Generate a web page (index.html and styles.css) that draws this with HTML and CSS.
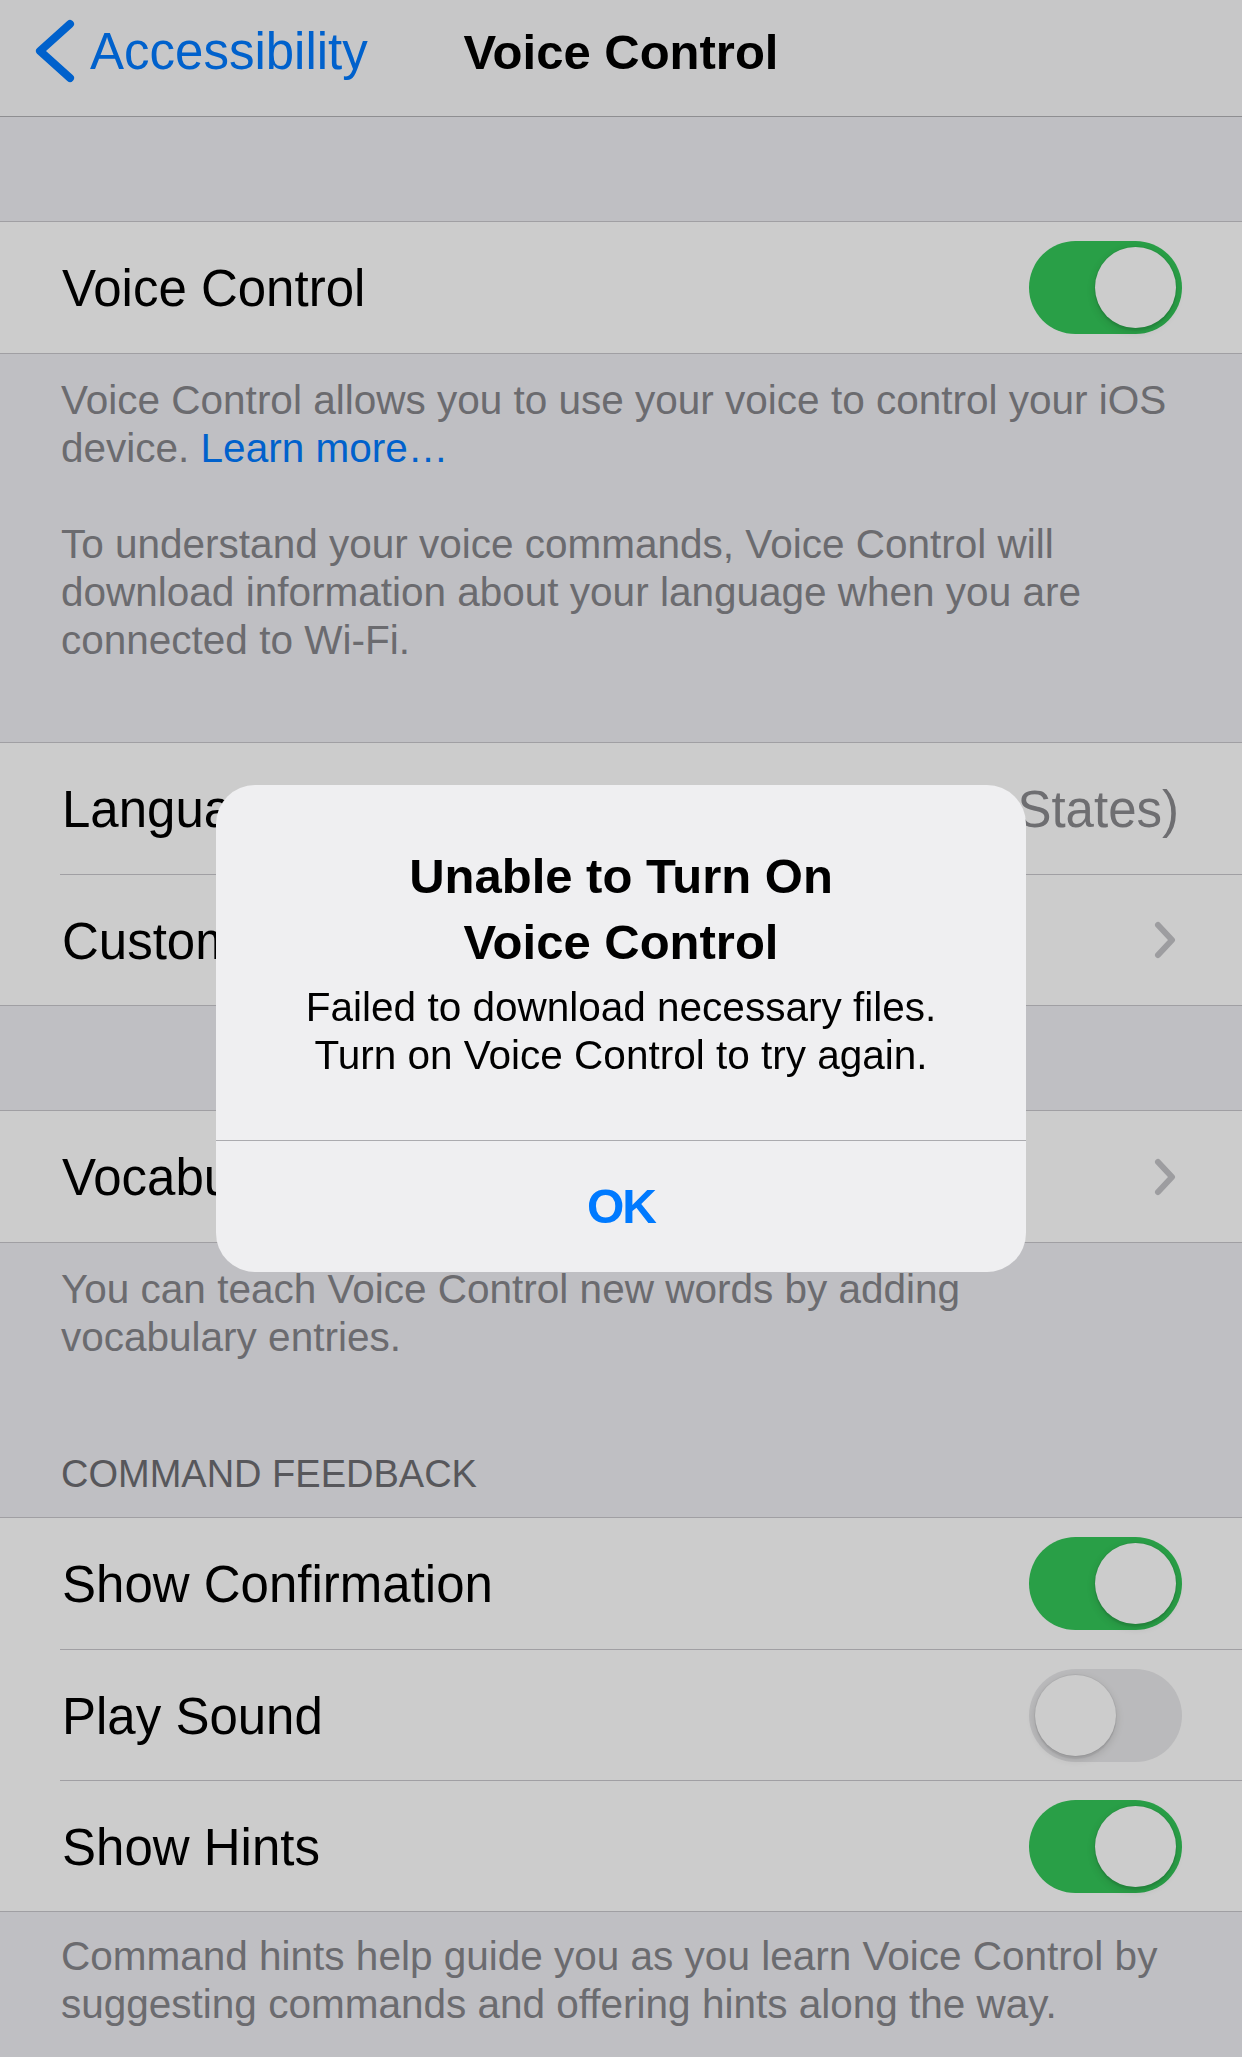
FILE: index.html
```html
<!DOCTYPE html>
<html>
<head>
    <title>Voice Control</title>
    <link rel="stylesheet" href="styles.css">
</head>
<body>
    <div class="screen">
        <header class="navbar">
            <a class="back">
                <svg class="back-chevron" width="46" height="60" viewBox="0 0 46 60">
                    <polyline points="40,2 10,29 40,56" />
                </svg>
                <span>Accessibility</span>
            </a>
            <h1 class="title">Voice Control</h1>
        </header>

        <section class="group spaced">
            <div class="cell">
                <span class="label">Voice Control</span>
                <span class="switch on"></span>
            </div>
        </section>
        <div class="footer">
            <p>Voice Control allows you to use your voice to control your iOS device. <a class="link">Learn more…</a></p>
            <p class="next">To understand your voice commands, Voice Control will download information about your language when you are connected to Wi-Fi.</p>
        </div>

        <section class="group">
            <div class="cell">
                <span class="label">Language</span>
                <span class="value">English (United States)</span>
            </div>
            <div class="cell">
                <span class="label">Customize Commands</span>
                <svg class="chevron" width="26" height="40" viewBox="0 0 26 40"><polyline points="5,5 19,20 5,35" /></svg>
            </div>
        </section>

        <section class="group spaced">
            <div class="cell">
                <span class="label">Vocabulary</span>
                <svg class="chevron" width="26" height="40" viewBox="0 0 26 40"><polyline points="5,5 19,20 5,35" /></svg>
            </div>
        </section>
        <div class="footer">
            <p>You can teach Voice Control new words by adding<br>vocabulary entries.</p>
        </div>

        <div class="section-header">COMMAND FEEDBACK</div>
        <section class="group">
            <div class="cell">
                <span class="label">Show Confirmation</span>
                <span class="switch on"></span>
            </div>
            <div class="cell">
                <span class="label">Play Sound</span>
                <span class="switch"></span>
            </div>
            <div class="cell">
                <span class="label">Show Hints</span>
                <span class="switch on"></span>
            </div>
        </section>
        <div class="footer last">
            <p>Command hints help guide you as you learn Voice Control by suggesting commands and offering hints along the way.</p>
        </div>
    </div>

    <!-- dimmed backdrop with the alert on top -->
    <div class="dim">
        <div class="alert">
            <div class="alert-body">
                <div class="alert-title">Unable to Turn On<br>Voice Control</div>
                <div class="alert-msg">Failed to download necessary files.<br>Turn on Voice Control to try again.</div>
            </div>
            <div class="alert-actions">
                <span class="alert-btn">OK</span>
            </div>
        </div>
    </div>
</body>
</html>
```

FILE: styles.css
```css
* { box-sizing: border-box; }
body { margin: 0; width: 1242px; height: 2057px; overflow: hidden; background: #efeff4; font-family: "Liberation Sans", Arial, sans-serif; color: #000; }
p { margin: 0; }

.screen { height: 2057px; }

/* navigation bar */
.navbar { display: grid; grid-template-columns: 1fr auto 1fr; align-items: start; height: 117px; padding: 22px 30px 0; background: #f9f9fb; border-bottom: 1px solid #b2b2b6; }
.back { display: flex; align-items: center; height: 60px; color: #007aff; font-size: 51px; line-height: 60px; }
.back-chevron { overflow: visible; margin-right: 14px; flex: none; }
.back-chevron polyline { fill: none; stroke: #007aff; stroke-width: 8; stroke-linecap: round; stroke-linejoin: round; }
.title { margin: 0; font-size: 49px; line-height: 60px; font-weight: bold; }

/* grouped table */
.group { background: #fff; border-top: 1px solid #c8c7cc; border-bottom: 1px solid #c8c7cc; }
.group.spaced { margin-top: 104px; }
.cell { display: flex; align-items: center; min-height: 131px; margin-left: 60px; padding: 0 60px 0 2px; }
.cell + .cell { border-top: 1px solid #c8c7cc; }
.label { padding-top: 2px; font-size: 51px; white-space: nowrap; }
.value { margin-left: auto; margin-right: 3px; padding-top: 2px; font-size: 51px; color: #8a8a8e; white-space: nowrap; }
.chevron { margin-left: auto; margin-right: 3px; flex: none; }
.chevron polyline { fill: none; stroke: #c5c5c8; stroke-width: 6; stroke-linecap: round; stroke-linejoin: round; }

/* toggle switch */
.switch { position: relative; margin-left: auto; flex: none; width: 153px; height: 93px; border-radius: 47px; background: #e9e9eb; }
.switch::after { content: ""; position: absolute; top: 6px; left: 6px; width: 81px; height: 81px; border-radius: 50%; background: #fff; box-shadow: 0 3px 8px rgba(0,0,0,0.15), 0 3px 1px rgba(0,0,0,0.06), 0 0 0 1px rgba(0,0,0,0.04); }
.switch.on { background: #34c759; }
.switch.on::after { left: auto; right: 6px; }

/* footers and headers */
.footer { padding: 22px 50px 78px 61px; font-size: 40.5px; line-height: 48px; color: #86868b; }
.footer.last { padding-top: 20px; }
.footer .next { margin-top: 48px; }
.link { color: #007aff; }
.section-header { padding: 12px 61px 20px; font-size: 38px; line-height: 46px; color: #6d6d72; }

/* alert */
.dim { position: fixed; top: 0; left: 0; right: 0; bottom: 0; display: flex; align-items: center; justify-content: center; background: rgba(0,0,0,0.2); }
.alert { width: 810px; background: #efeff1; border-radius: 39px; overflow: hidden; }
.alert-body { padding: 58px 48px 61px; text-align: center; }
.alert-title { font-size: 49px; line-height: 66px; font-weight: bold; }
.alert-msg { margin-top: 8px; font-size: 40.5px; line-height: 48px; }
.alert-actions { display: flex; align-items: center; justify-content: center; height: 132px; border-top: 1px solid #ababaf; }
.alert-btn { color: #007aff; font-size: 48px; font-weight: bold; letter-spacing: -2px; }
```
